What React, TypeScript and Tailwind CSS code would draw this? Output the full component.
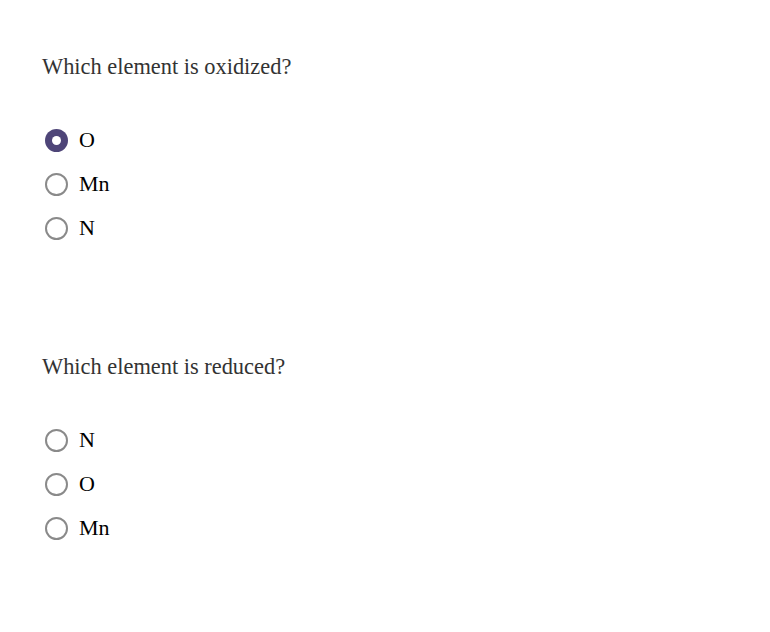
import React, { useState } from 'react';

interface Question {
  id: string;
  prompt: string;
  options: string[];
}

const questions: Question[] = [
  { id: 'oxidized', prompt: 'Which element is oxidized?', options: ['O', 'Mn', 'N'] },
  { id: 'reduced', prompt: 'Which element is reduced?', options: ['N', 'O', 'Mn'] },
];

const App: React.FC = () => {
  const [answers, setAnswers] = useState<Record<string, string>>({ oxidized: 'O' });

  return (
    <div className="min-h-screen bg-white px-[42px] pt-[53px]" style={{ fontFamily: '"Liberation Serif", "Times New Roman", serif' }}>
      {questions.map((q) => (
        <div key={q.id} className="mb-[113px]">
          <p className="text-[22.4px] leading-[28px] text-[#333333] mb-[47px]">{q.prompt}</p>
          <div className="flex flex-col gap-[20px]">
            {q.options.map((opt) => {
              const checked = answers[q.id] === opt;
              return (
                <label
                  key={opt}
                  className="flex items-center cursor-pointer h-[24px]"
                  onClick={() => setAnswers({ ...answers, [q.id]: opt })}
                >
                  <span className="ml-[3px] mr-[11px] flex items-center justify-center">
                    {checked ? (
                      <span className="h-[23px] w-[23px] rounded-full bg-[#4e4578] flex items-center justify-center">
                        <span className="h-[9px] w-[9px] rounded-full bg-white" />
                      </span>
                    ) : (
                      <span className="h-[23px] w-[23px] rounded-full border-2 border-[#8a8a8a] bg-white" />
                    )}
                  </span>
                  <span className="text-[22px] leading-[24px] text-black">{opt}</span>
                </label>
              );
            })}
          </div>
        </div>
      ))}
    </div>
  );
};

export default App;
